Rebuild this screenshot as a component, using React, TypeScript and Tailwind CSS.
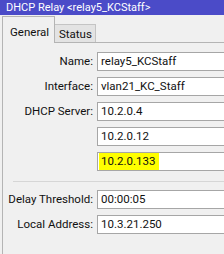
import React from "react";

const Row = ({ label, value, highlight, last }: { label?: string; value: string; highlight?: boolean; last?: boolean }) => (
  <div className={`flex items-center h-[19px] ${last ? "" : "mb-[6px]"}`}>
    <div className="w-[89px] text-right text-[#111111] whitespace-nowrap">{label ? label : ""}</div>
    <div className="ml-[4px] flex-1 min-w-0 h-[19px] bg-white border border-[#a6a6a6] border-r-0 flex items-center pl-[1px] whitespace-nowrap overflow-hidden">
      {highlight ? (
        <span className="bg-[#ffff00] pl-[2px] pr-[4px] h-[17px] leading-[17px] text-[#111111]">{value}</span>
      ) : (
        <span className="px-[2px] text-[#111111]">{value}</span>
      )}
    </div>
  </div>
);

export default function App() {
  return (
    <div
      className="w-[224px] h-[254px] overflow-hidden bg-[#f0f0f0] text-[11.5px] leading-[13px] flex flex-col"
      style={{ fontFamily: 'Roboto, "Liberation Sans", Arial, sans-serif' }}
    >
      <div className="h-[15px] shrink-0 bg-[#4b4bc8] text-white text-[11px] pl-[6px] leading-[15px] whitespace-nowrap">
        DHCP Relay &lt;relay5_KCStaff&gt;
      </div>
      <div className="h-[28px] shrink-0 flex items-end pl-[2px] relative z-10">
        <div className="w-[53px] h-[27px] bg-[#f0f0f0] border border-b-0 border-[#b4b4b4] pl-[7px] pt-[9px] text-[#111111] whitespace-nowrap">
          General
        </div>
        <div className="w-[41px] h-[18px] bg-[#e3e3e3] border border-l-0 border-b-0 border-[#c4c4c4] pl-[4px] pt-[3px] text-[#111111] mb-[1px] whitespace-nowrap">
          Status
        </div>
      </div>
      <div className="flex-1 ml-[2px] -mt-[1px] border-l border-t border-[#b4b4b4] pt-[9px] pl-[1px]">
        <Row label="Name:" value="relay5_KCStaff" />
        <Row label="Interface:" value="vlan21_KC_Staff" />
        <Row label="DHCP Server:" value="10.2.0.4" />
        <Row value="10.2.0.12" />
        <Row value="10.2.0.133" highlight last />
        <div className="mt-[10px] mb-[8px] ml-[9px] border-t border-[#d6d6d6]" />
        <Row label="Delay Threshold:" value="00:00:05" />
        <Row label="Local Address:" value="10.3.21.250" />
      </div>
    </div>
  );
}
